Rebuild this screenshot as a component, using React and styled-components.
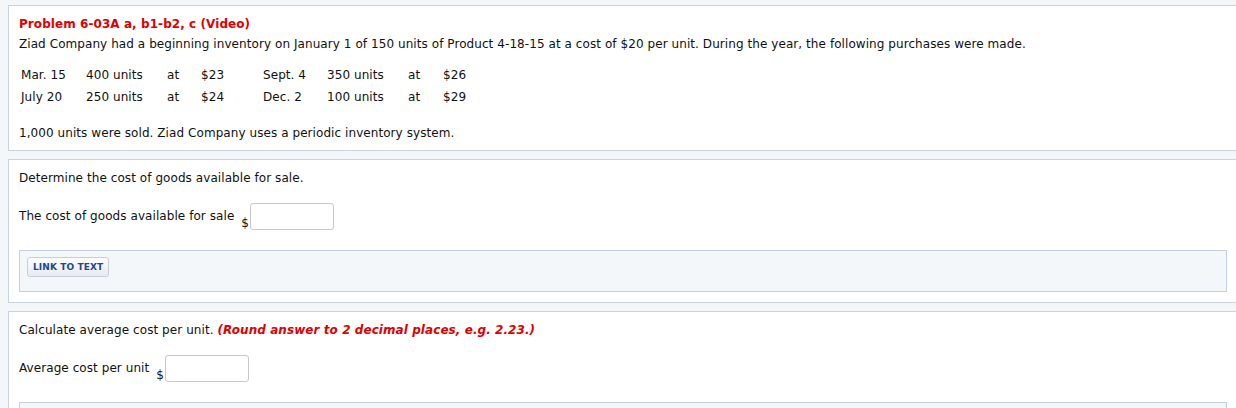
import styled, { createGlobalStyle } from 'styled-components';

const GlobalStyle = createGlobalStyle`
  html, body {
    margin: 0;
    padding: 0;
    background: #f4f7fa;
    overflow: hidden;
  }
  body {
    font-family: "DejaVu Sans", Verdana, sans-serif;
    font-size: 12px;
    letter-spacing: 0.07px;
    color: #111;
  }
`;

const Page = styled.div`
  display: flex;
  flex-direction: column;
  gap: 8px;
  padding: 5px 0 0 8px;
  width: 1230px;
`;

const Panel = styled.section`
  background: #fff;
  border: 1px solid #c9d3df;
  padding: 10px 10px ${(p) => p.$bottom || 10}px;
`;

const Title = styled.h2`
  margin: 0 0 4px;
  font-size: 12px;
  line-height: 16px;
  font-weight: bold;
  color: #e00000;
`;

const Text = styled.p`
  margin: 0;
  line-height: 16px;
`;

const Purchases = styled.div`
  display: grid;
  grid-template-columns: 65px 81px 34px 62px 64px 81px 35px auto;
  grid-auto-rows: 22px;
  align-items: center;
  padding-left: 2px;
  margin: 12px 0 17px;
`;

const Warning = styled.span`
  color: #e00000;
  font-weight: bold;
  font-style: italic;
`;

const AnswerRow = styled.div`
  display: flex;
  align-items: center;
  margin-top: 17px;
`;

const AnswerLabel = styled.span`
  line-height: 16px;
  margin-right: 7px;
  margin-top: -2px;
`;

const Dollar = styled.span`
  align-self: flex-end;
  line-height: 14px;
  margin-right: 1px;
`;

const AnswerInput = styled.input`
  box-sizing: border-box;
  width: 84px;
  height: 27px;
  border: 1px solid #c8c8c8;
  border-radius: 3px;
  background: #fff;
  padding: 2px 4px;
  font: inherit;
`;

const LinkBox = styled.div`
  margin-top: 20px;
  background: #f4f7fa;
  border: 1px solid #c5d0dc;
  padding: 6px 7px 14px;
`;

const LinkButton = styled.button`
  box-sizing: border-box;
  height: 20px;
  padding: 0 5px;
  border: 1px solid #c6ced8;
  border-radius: 3px;
  background: linear-gradient(#fdfdfe, #e6ebf0);
  color: #24468a;
  font-family: "DejaVu Sans", Verdana, sans-serif;
  font-size: 9px;
  font-weight: bold;
  letter-spacing: 0.1px;
  cursor: pointer;
`;

const purchases = [
  ['Mar. 15', '400 units', 'at', '$23', 'Sept. 4', '350 units', 'at', '$26'],
  ['July 20', '250 units', 'at', '$24', 'Dec. 2', '100 units', 'at', '$29'],
];

const Answer = ({ label }) => (
  <AnswerRow>
    <AnswerLabel>{label}</AnswerLabel>
    <Dollar>$</Dollar>
    <AnswerInput type="text" />
  </AnswerRow>
);

export default function App() {
  return (
    <>
      <GlobalStyle />
      <Page>
        <Panel $bottom={9}>
          <Title>Problem 6-03A a, b1-b2, c (Video)</Title>
          <Text>
            Ziad Company had a beginning inventory on January 1 of 150 units of Product 4-18-15 at a cost
            of $20 per unit. During the year, the following purchases were made.
          </Text>
          <Purchases>
            {purchases.map((row) => row.map((cell, i) => <span key={row[0] + i}>{cell}</span>))}
          </Purchases>
          <Text>1,000 units were sold. Ziad Company uses a periodic inventory system.</Text>
        </Panel>

        <Panel>
          <Text>Determine the cost of goods available for sale.</Text>
          <Answer label="The cost of goods available for sale" />
          <LinkBox>
            <LinkButton>LINK TO TEXT</LinkButton>
          </LinkBox>
        </Panel>

        <Panel>
          <Text>
            Calculate average cost per unit.{' '}
            <Warning>(Round answer to 2 decimal places, e.g. 2.23.)</Warning>
          </Text>
          <Answer label="Average cost per unit" />
          <LinkBox>
            <LinkButton>LINK TO TEXT</LinkButton>
          </LinkBox>
        </Panel>
      </Page>
    </>
  );
}
